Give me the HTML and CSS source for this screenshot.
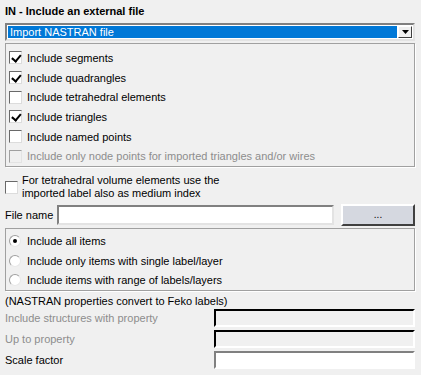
FILE: index.html
```html
<!DOCTYPE html>
<html lang="en">
<head>
    <meta charset="UTF-8">
    <title>IN - Include an external file</title>
    <link rel="stylesheet" href="styles.css">
</head>
<body>
    <div class="panel">
        <div class="title">IN - Include an external file</div>

        <div class="combo">
            <div class="combo-value">Import NASTRAN file</div>
            <div class="combo-button">
                <svg width="7" height="4" viewBox="0 0 7 4"><path d="M0 0H7L3.5 4Z" fill="#000"/></svg>
            </div>
        </div>

        <div class="group options">
            <div class="row"><span class="check on"></span>Include segments</div>
            <div class="row"><span class="check on"></span>Include quadrangles</div>
            <div class="row"><span class="check"></span>Include tetrahedral elements</div>
            <div class="row"><span class="check on"></span>Include triangles</div>
            <div class="row"><span class="check"></span>Include named points</div>
            <div class="row disabled"><span class="check off"></span>Include only node points for imported triangles and/or wires</div>
        </div>

        <div class="tetra">
            <span class="check"></span>
            <div class="tetra-text">For tetrahedral volume elements use the<br>imported label also as medium index</div>
        </div>

        <div class="file-row">
            <span class="file-label">File name</span>
            <div class="field file-input"></div>
            <div class="browse">...</div>
        </div>

        <div class="group radios">
            <div class="row"><span class="radio on"></span>Include all items</div>
            <div class="row"><span class="radio"></span>Include only items with single label/layer</div>
            <div class="row"><span class="radio"></span>Include items with range of labels/layers</div>
        </div>

        <div class="note">(NASTRAN properties convert to Feko labels)</div>

        <div class="prop-row disabled">
            <span class="prop-label">Include structures with property</span>
            <div class="field prop-field off"></div>
        </div>
        <div class="prop-row disabled">
            <span class="prop-label">Up to property</span>
            <div class="field prop-field off"></div>
        </div>
        <div class="prop-row">
            <span class="prop-label">Scale factor</span>
            <div class="field prop-field"></div>
        </div>
    </div>
</body>
</html>
```

FILE: styles.css
```css
body {
    margin: 0;
    background-color: #f0f0f0;
    color: #000000;
    font-family: "Liberation Sans", Arial, sans-serif;
    font-size: 11px;
}
.panel {
    width: 410px;
    padding: 4px 0 0 5px;
    display: flex;
    flex-direction: column;
}
.title {
    font-weight: bold;
    height: 14px;
    line-height: 14px;
    margin-bottom: 5px;
}
.combo {
    display: flex;
    height: 18px;
    box-sizing: border-box;
    border: 2px solid;
    border-color: #808080 #e3e3e3 #e3e3e3 #808080;
    background-color: #ffffff;
    padding: 1px;
}
.combo-value {
    flex: 1;
    background-color: #0078d7;
    color: #ffffff;
    line-height: 13px;
    padding-left: 2px;
}
.combo-button {
    width: 14px;
    margin-left: 1px;
    box-sizing: border-box;
    border: 1px solid;
    border-color: #ffffff #404040 #404040 #ffffff;
    background-color: #f0f0f0;
    display: flex;
    align-items: center;
    justify-content: center;
}
.group {
    border: 1px solid #a0a0a0;
    box-shadow: 1px 1px 0 #ffffff;
    display: flex;
    flex-direction: column;
}
.options {
    margin-top: 2px;
    padding: 4px 3px 0 3px;
    height: 124px;
    box-sizing: border-box;
}
.row {
    height: 20px;
    display: flex;
    align-items: center;
}
.disabled {
    color: #8d8d8d;
}
.check {
    width: 13px;
    height: 13px;
    box-sizing: border-box;
    border: 1px solid;
    border-color: #696969 #dcdcdc #dcdcdc #696969;
    background-color: #ffffff;
    margin-right: 5px;
    flex-shrink: 0;
    position: relative;
}
.check.on::after {
    content: "";
    position: absolute;
    left: 2px;
    top: 1px;
    width: 4px;
    height: 7px;
    border: solid #000000;
    border-width: 0 2px 2px 0;
    transform: rotate(40deg) translate(1px, -1px);
}
.check.off {
    background-color: #f0f0f0;
    border-color: #a0a0a0 #e3e3e3 #e3e3e3 #a0a0a0;
}
.tetra {
    display: flex;
    align-items: center;
    margin-top: 7px;
    height: 26px;
}
.tetra .check {
    margin-right: 4px;
}
.tetra-text {
    line-height: 13px;
}
.file-row {
    display: flex;
    align-items: center;
    margin-top: 4px;
    height: 22px;
}
.file-label {
    width: 52px;
}
.field {
    box-sizing: border-box;
    border: 2px solid;
    border-color: #696969 #ffffff #ffffff #696969;
    background-color: #ffffff;
}
.file-input {
    width: 277px;
    height: 20px;
    border-color: #808080 #e3e3e3 #e3e3e3 #808080;
}
.browse {
    width: 74px;
    height: 22px;
    margin-left: 7px;
    box-sizing: border-box;
    border: 2px solid;
    border-color: #ffffff #404040 #404040 #ffffff;
    background-color: #d5d8e0;
    text-align: center;
    line-height: 18px;
    font-size: 10px;
}
.radios {
    margin-top: 2px;
    padding: 2px 3px 0 3px;
    height: 63px;
    box-sizing: border-box;
}
.radio {
    width: 12px;
    height: 12px;
    box-sizing: border-box;
    border-radius: 50%;
    border: 1px solid;
    border-color: #a0a0a0 #e8e8e8 #e8e8e8 #a0a0a0;
    background-color: #ffffff;
    margin-right: 6px;
    flex-shrink: 0;
    position: relative;
}
.radio.on::after {
    content: "";
    position: absolute;
    left: 3px;
    top: 3px;
    width: 4px;
    height: 4px;
    border-radius: 50%;
    background-color: #000000;
}
.note {
    margin-top: 3px;
    height: 14px;
    line-height: 14px;
}
.prop-row {
    display: flex;
    align-items: center;
    justify-content: space-between;
    height: 18px;
    margin-top: 1px;
}
.prop-row + .prop-row {
    margin-top: 3px;
}
.prop-field {
    width: 201px;
    height: 18px;
    border-color: #808080 #ffffff #ffffff #808080;
}
.prop-field.off {
    background-color: #f0f0f0;
    border-color: #000000 #ffffff #ffffff #000000;
}
```
